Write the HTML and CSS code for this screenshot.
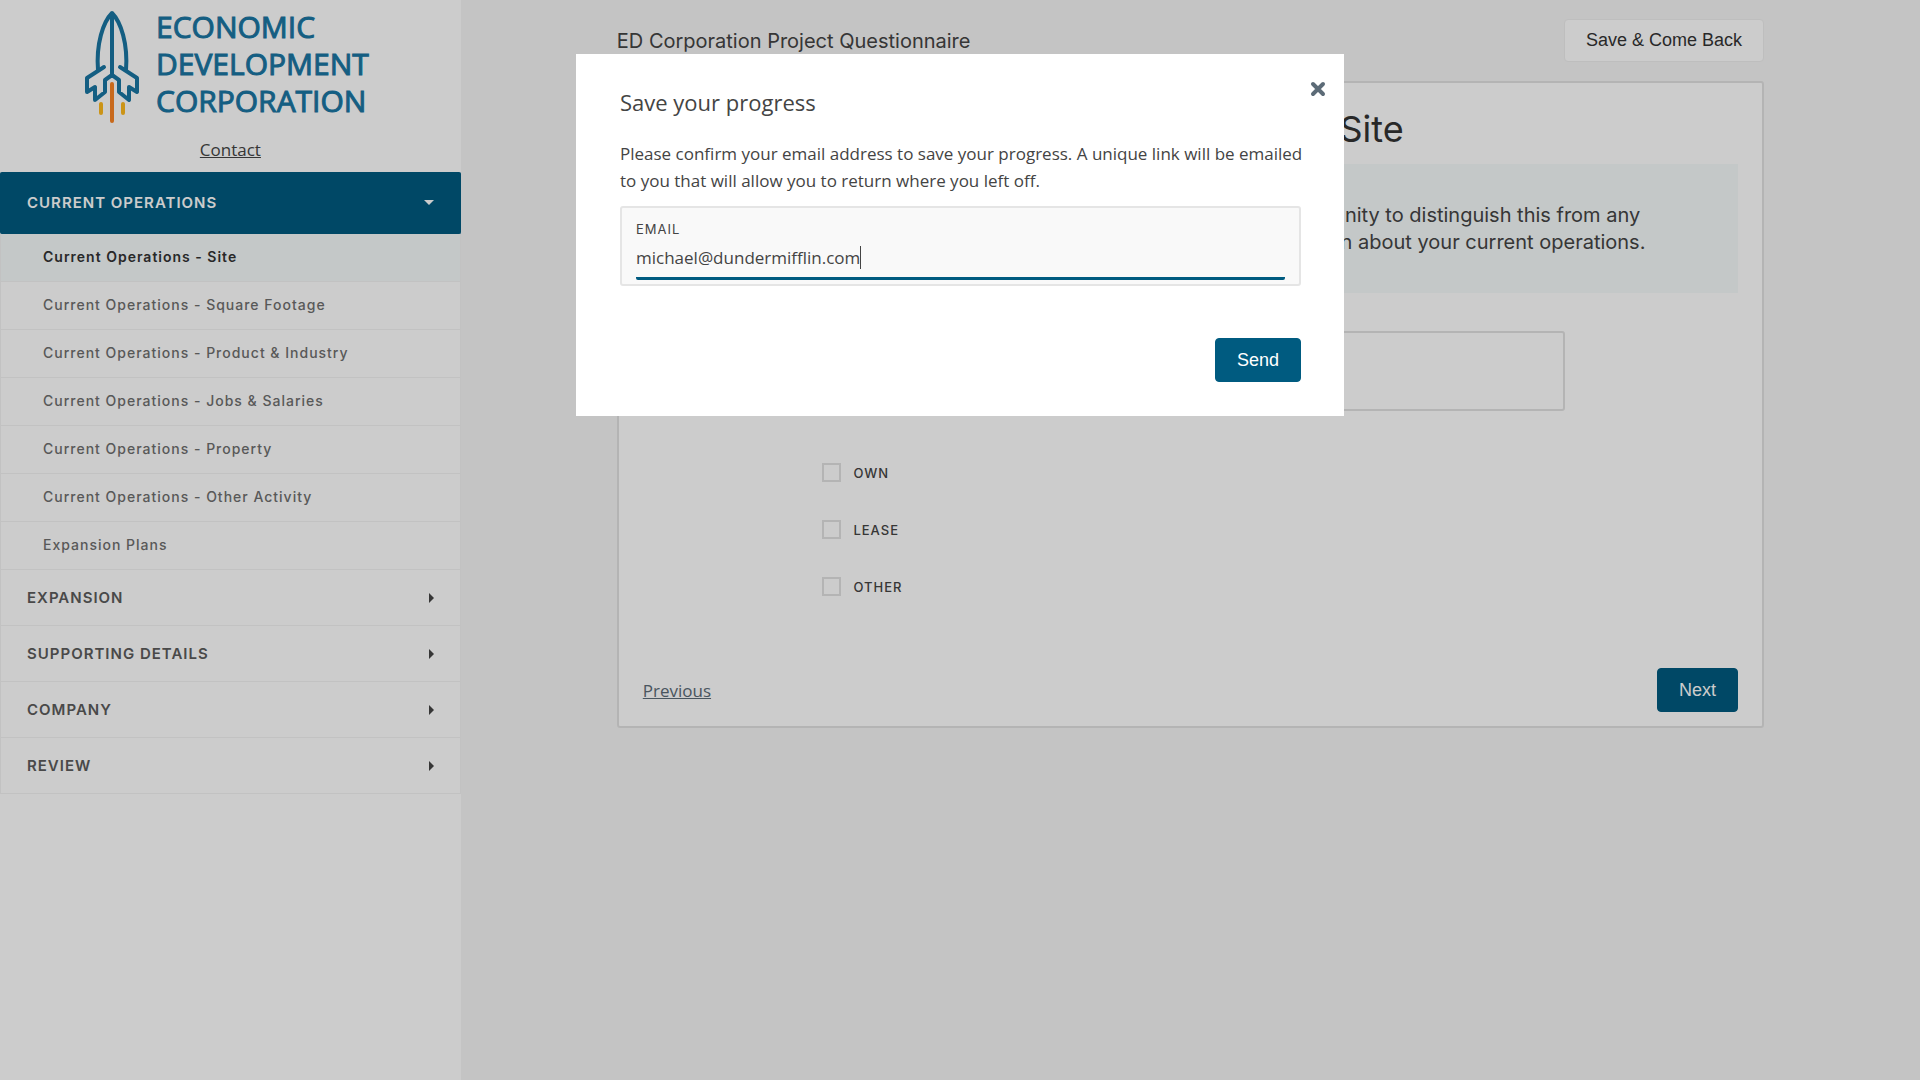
FILE: index.html
```html
<!DOCTYPE html>
<html lang="en">
<head>
    <meta charset="UTF-8">
    <meta name="viewport" content="width=device-width, initial-scale=1.0">
    <title>ED Corporation Project Questionnaire</title>
    <link rel="stylesheet" href="styles.css">
</head>
<body>

<div class="page">
    <aside class="sidebar">
        <div class="logo">
            <svg class="rocket" viewBox="0 0 56 116" width="56" height="116" fill="none" stroke-width="4" stroke-linecap="round" stroke-linejoin="round">
                <g stroke="#1a76a3">
                    <path d="M28 5V67M14 62C12 36 19 14 28 5C37 14 44 36 42 62"/>
                    <path d="M20 59L3 70V84L11 79V92L21 84V72L28 67L35 72V84L45 92V79L53 84V70L36 59"/>
                </g>
                <path stroke="#fb8423" d="M28 76V113"/>
                <path stroke="#feb91d" d="M17 96V105M39 96V105"/>
            </svg>
            <div class="logo-text">ECONOMIC<br>DEVELOPMENT<br>CORPORATION</div>
        </div>
        <a href="#" class="contact">Contact</a>

        <nav class="menu">
            <button class="section open">Current Operations</button>
            <a href="#" class="step active">Current Operations - Site</a>
            <a href="#" class="step">Current Operations - Square Footage</a>
            <a href="#" class="step">Current Operations - Product &amp; Industry</a>
            <a href="#" class="step">Current Operations - Jobs &amp; Salaries</a>
            <a href="#" class="step">Current Operations - Property</a>
            <a href="#" class="step">Current Operations - Other Activity</a>
            <a href="#" class="step">Expansion Plans</a>
            <button class="section">Expansion</button>
            <button class="section">Supporting Details</button>
            <button class="section">Company</button>
            <button class="section">Review</button>
        </nav>
    </aside>

    <main class="content">
        <header class="topbar">
            <span class="form-name">ED Corporation Project Questionnaire</span>
            <button class="btn btn-light">Save &amp; Come Back</button>
        </header>

        <form class="card">
            <h1>Current Operations - Site</h1>
            <p class="info">Please name your current site and include the county or community to distinguish this from any<br>other sites you may have. The next few pages ask for information about your current operations.</p>
            <div class="fields">
                <input type="text" class="site-name" aria-label="Site name">
                <label class="check"><input type="checkbox">Own</label>
                <label class="check"><input type="checkbox">Lease</label>
                <label class="check"><input type="checkbox">Other</label>
            </div>
            <div class="actions">
                <a href="#" class="previous">Previous</a>
                <button type="button" class="btn btn-primary">Next</button>
            </div>
        </form>
    </main>
</div>

<div class="overlay">
    <form class="modal" role="dialog" aria-labelledby="modal-title">
        <button type="button" class="close" aria-label="Close">
            <svg viewBox="0 0 16 16" width="16" height="16" stroke="#5c6b77" stroke-width="4" stroke-linecap="round">
                <path d="M3 3L13 13M13 3L3 13"/>
            </svg>
        </button>
        <h2 id="modal-title">Save your progress</h2>
        <p>Please confirm your email address to save your progress. A unique link will be emailed to you that will allow you to return where you left off.</p>
        <div class="field">
            <label for="email">Email</label>
            <div class="input-line">
                <input type="text" id="email" value="michael@dundermifflin.com">
                <span class="caret"></span>
            </div>
        </div>
        <div class="modal-actions">
            <button type="button" class="btn btn-primary">Send</button>
        </div>
    </form>
</div>

</body>
</html>
```
FILE: styles.css
```css
* {
    box-sizing: border-box;
}
body {
    margin: 0;
    font-family: "Open Sans", "Noto Sans", sans-serif;
    font-size: 17px;
    color: #444;
    background-color: #f5f5f5;
}
.page {
    display: flex;
    min-height: 100vh;
}

/* sidebar */
.sidebar {
    width: 24%;
    background-color: #fff;
    text-align: center;
}
.logo {
    display: flex;
    justify-content: center;
    gap: 16px;
    padding: 8px 8px 0 0;
}
.logo-text {
    font-size: 30px;
    line-height: 37px;
    text-align: left;
    color: #1a76a3;
    -webkit-text-stroke: 1px #1a76a3;
}
.contact {
    display: block;
    margin: 12px 0 8px;
    line-height: 28px;
    color: #444;
}
.section,
.step {
    font-family: Inter, sans-serif;
    letter-spacing: 1px;
    text-align: left;
    border: 1px solid #f3f3f3;
    border-top: none;
}
.section {
    display: flex;
    justify-content: space-between;
    align-items: center;
    width: 100%;
    height: 56px;
    padding: 0 26px;
    font-size: 15px;
    font-weight: 600;
    text-transform: uppercase;
    color: #5c5c5c;
    background-color: #fff;
    cursor: pointer;
}
.section::after {
    content: "";
    border-left: 5px solid #444;
    border-top: 5px solid transparent;
    border-bottom: 5px solid transparent;
}
.section.open {
    height: 62px;
    color: #fff;
    background-color: #005b80;
    border-color: #005b80;
    border-radius: 2px;
}
.section.open::after {
    border-top: 5px solid #fff;
    border-left: 5px solid transparent;
    border-right: 5px solid transparent;
    border-bottom: none;
}
.step {
    display: block;
    padding: 0 42px 1px;
    font-size: 14px;
    font-weight: 500;
    line-height: 46px;
    text-decoration: none;
    color: #6f6f6f;
}
.step.active {
    font-weight: 600;
    color: #333;
    background-color: #f5fafb;
}

/* main form */
.content {
    flex: 1;
    padding: 19px 156px;
}
.topbar {
    display: flex;
    justify-content: space-between;
    align-items: center;
    margin-bottom: 19px;
}
.form-name {
    font-family: Inter, sans-serif;
    font-size: 20px;
}
.btn {
    height: 44px;
    padding: 0 21px;
    font-family: "Liberation Sans", Arial, sans-serif;
    font-size: 18px;
    border: 1px solid #eee;
    border-radius: 4px;
    cursor: pointer;
}
.btn-light {
    height: 43px;
    color: #333;
    background-color: #fff;
}
.btn-primary {
    color: #fff;
    background-color: #005b80;
    border-color: #005b80;
}
.card {
    padding: 26px 24px 14px;
    background-color: #fff;
    border: 2px solid #e2e2e2;
    border-radius: 3px;
}
.card h1 {
    margin: 0 0 15px;
    font-family: Inter, sans-serif;
    font-size: 36px;
    font-weight: 400;
    line-height: 40px;
    text-align: center;
    color: #333;
}
.info {
    margin: 0 0 38px;
    padding: 38px 20px 37px;
    font-family: Inter, sans-serif;
    font-size: 20px;
    line-height: 27px;
    text-align: center;
    background-color: #f5fafb;
}
.fields {
    width: 750px;
    max-width: 100%;
    margin: 0 auto;
}
.site-name {
    width: 100%;
    height: 80px;
    margin-bottom: 33px;
    background: none;
    border: 2px solid #e2e2e2;
    border-radius: 3px;
}
.check {
    display: flex;
    align-items: center;
    gap: 12px;
    height: 57px;
    padding-left: 7px;
    font-family: Inter, sans-serif;
    font-size: 13px;
    font-weight: 500;
    letter-spacing: 1px;
    text-transform: uppercase;
}
.check input {
    appearance: none;
    width: 19px;
    height: 19px;
    margin: 0;
    border: 2px solid #e2e2e2;
}
.actions {
    display: flex;
    justify-content: space-between;
    align-items: center;
    margin-top: 53px;
}
.previous {
    color: #5c6b77;
}

/* save dialog */
.overlay {
    position: fixed;
    inset: 0;
    background-color: rgba(0, 0, 0, 0.2);
}
.modal {
    position: relative;
    width: 40%;
    margin: 54px auto 0;
    padding: 33px 43px 34px 44px;
    background-color: #fff;
}
.close {
    position: absolute;
    top: 27px;
    right: 18px;
    padding: 0;
    line-height: 0;
    background: none;
    border: none;
    cursor: pointer;
}
.modal h2 {
    margin: 0 0 23px;
    font-size: 22px;
    font-weight: 400;
    line-height: 30px;
}
.modal p {
    margin: 0 -10px 12px 0;
    line-height: 27px;
}
.field {
    padding: 13px 14px 4px;
    background-color: #f9f9f9;
    border: 2px solid #e5e5e5;
    border-radius: 3px;
}
.field label {
    display: block;
    font-family: Inter, sans-serif;
    font-size: 13px;
    line-height: 16px;
    letter-spacing: 1px;
    text-transform: uppercase;
}
.input-line {
    display: flex;
    align-items: center;
    height: 43px;
    border-bottom: 3px solid #005b80;
    border-radius: 2px;
}
.field input {
    field-sizing: content;
    max-width: 100%;
    padding: 0;
    font-family: inherit;
    font-size: 17px;
    color: #444;
    background: none;
    border: none;
    outline: none;
    caret-color: transparent;
}
.caret {
    width: 1px;
    height: 23px;
    background-color: #444;
}
.modal-actions {
    display: flex;
    justify-content: flex-end;
    margin-top: 52px;
}
```
